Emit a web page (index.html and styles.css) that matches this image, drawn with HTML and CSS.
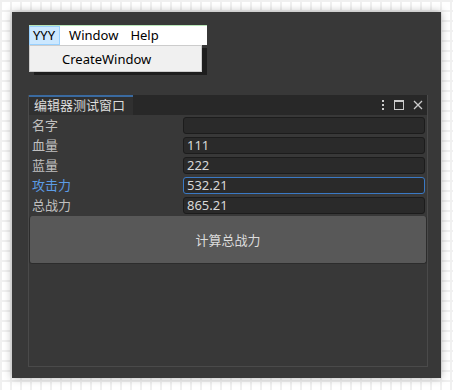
FILE: index.html
```html
<!DOCTYPE html>
<html>
<head>
    <title>Editor Test</title>
    <link rel="stylesheet" href="styles.css">
</head>
<body>
    <div class="window">
        <div class="menubar">
            <span class="menu-item active">YYY</span>
            <span class="menu-item">Window</span>
            <span class="menu-item">Help</span>
            <div class="dropdown">
                <div class="dropdown-item">CreateWindow</div>
            </div>
        </div>

        <div class="dock">
            <div class="tabbar">
                <div class="tab">编辑器测试窗口</div>
                <div class="tab-icons">
                    <svg width="6" height="12" viewBox="0 0 6 12"><rect x="2" y="1" width="2" height="2" fill="#ccc"/><rect x="2" y="5" width="2" height="2" fill="#ccc"/><rect x="2" y="9" width="2" height="2" fill="#ccc"/></svg>
                    <svg width="12" height="12" viewBox="0 0 12 12"><rect x="1.5" y="1.5" width="9" height="9" fill="none" stroke="#ccc" stroke-width="1"/><rect x="1" y="1" width="10" height="2" fill="#ccc"/></svg>
                    <svg width="12" height="12" viewBox="0 0 12 12"><path d="M2 2 L10 10 M10 2 L2 10" stroke="#ccc" stroke-width="1.3"/></svg>
                </div>
            </div>

            <div class="fields">
                <div class="field">
                    <label>名字</label>
                    <div class="input"></div>
                </div>
                <div class="field">
                    <label>血量</label>
                    <div class="input">111</div>
                </div>
                <div class="field">
                    <label>蓝量</label>
                    <div class="input">222</div>
                </div>
                <div class="field focused">
                    <label>攻击力</label>
                    <div class="input">532.21</div>
                </div>
                <div class="field">
                    <label>总战力</label>
                    <div class="input">865.21</div>
                </div>
            </div>

            <button class="calc">计算总战力</button>
        </div>
    </div>
</body>
</html>
```

FILE: styles.css
```css
body {
    margin: 0;
    width: 453px;
    height: 390px;
    overflow: hidden;
    font-family: "Noto Sans", "Noto Sans CJK SC", sans-serif;
    background-color: #ffffff;
    background-image:
        linear-gradient(to right, #f0f0f0 2px, transparent 2px),
        linear-gradient(to bottom, #f0f0f0 2px, transparent 2px);
    background-size: 10px 10px;
}
.window {
    position: relative;
    margin: 12px 0 0 12px;
    width: 429px;
    height: 366px;
    background: #383838;
    box-shadow: 0 0 8px rgba(0, 0, 0, 0.3);
    padding-top: 13px;
    box-sizing: border-box;
}
.menubar {
    position: relative;
    margin-left: 17px;
    width: 178px;
    height: 20px;
    background: #fff;
    border-top: 1px solid #b8e6b8;
    box-sizing: border-box;
    display: flex;
    align-items: stretch;
    font-size: 13px;
    color: #000;
}
.menu-item {
    display: flex;
    align-items: center;
    padding: 0 6px;
    line-height: 1;
}
.menu-item.active {
    background: #cce8ff;
    border: 1px solid #99d1ff;
    padding: 0 4px 0 3px;
    margin-right: 3px;
}
.dropdown {
    position: absolute;
    top: 19px;
    left: 0;
    width: 173px;
    height: 27px;
    box-sizing: border-box;
    background: #f0f0f0;
    border: 1px solid #cccccc;
    box-shadow: 5px 3px 0 #1e1e1e;
    display: flex;
    align-items: center;
}
.dropdown-item {
    padding-left: 32px;
    font-size: 13px;
    color: #000;
}
.dock {
    margin: 50px 0 0 16px;
    width: 400px;
    height: 272px;
    box-sizing: border-box;
    border: 1px solid #4a4a4a;
    border-top: none;
    display: flex;
    flex-direction: column;
}
.tabbar {
    height: 20px;
    background: #282828;
    display: flex;
    align-items: stretch;
    justify-content: space-between;
}
.tab {
    width: 104px;
    box-sizing: border-box;
    border-top: 2px solid #3a6aa0;
    background: #303030;
    color: #dcdcdc;
    font-size: 13px;
    line-height: 17px;
    padding-left: 5px;
}
.tab-icons {
    display: flex;
    align-items: center;
    gap: 7px;
    padding-right: 3px;
}
.fields {
    display: flex;
    flex-direction: column;
    gap: 3px;
    padding: 2px 2px 0 3px;
}
.field {
    display: flex;
    align-items: center;
    height: 17px;
}
.field label {
    width: 151px;
    color: #c0c0c0;
    font-size: 13px;
    line-height: 17px;
}
.field.focused label {
    color: #5c9ce6;
}
.input {
    flex: 1;
    height: 17px;
    box-sizing: border-box;
    background: #2a2a2a;
    border: 1px solid #1c1c1c;
    border-radius: 3px;
    color: #d8d8d8;
    font-size: 13px;
    line-height: 15px;
    padding-left: 3px;
}
.field.focused .input {
    border-color: #3a79c4;
}
.calc {
    margin: 2px 0 0 0;
    height: 48px;
    background: #585858;
    border: 1px solid #2c2c2c;
    border-top: none;
    border-radius: 3px;
    color: #dcdcdc;
    font-family: "Noto Sans CJK SC", sans-serif;
    font-size: 13px;
    cursor: pointer;
}
```
